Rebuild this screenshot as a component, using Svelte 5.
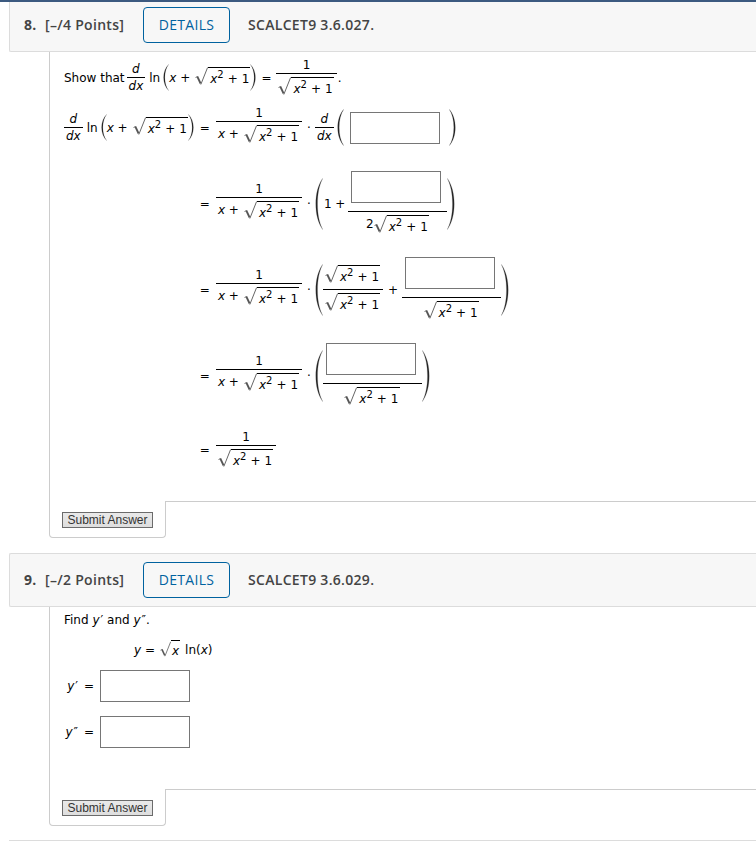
<script>
  let first = $state({ inner: '', chain: '', sum: '', total: '' });
  let second = $state({ prime: '', doublePrime: '' });

  function handleSubmit(event) {
    event.preventDefault();
  }
</script>

{#snippet paren(side, size)}
  <svg class="paren {size}" class:flip={side === 'right'} viewBox="0 0 8 52" preserveAspectRatio="none" aria-hidden="true">
    <path d="M7.800 0.300C3 7 0.800 16 0.800 26s2.200 19 7 25.700C4.200 45 2.500 36 2.500 26S4.200 7 7.800 0.300z" fill="#222" stroke="#555" stroke-width="0.200" />
  </svg>
{/snippet}

{#snippet sign()}
  <svg class="sign" viewBox="0 0 13 18" aria-hidden="true">
    <path d="M0.500 10.500L2.500 9.500" fill="none" stroke="#777" stroke-width="1" />
    <path d="M2.300 9.500L5.600 16.500" fill="none" stroke="#555" stroke-width="1.800" />
    <path d="M5.800 17.500L12.600 0.500" fill="none" stroke="#666" stroke-width="1" />
  </svg>
{/snippet}

{#snippet root()}
  <span class="root">{@render sign()}<span class="radicand"><i>x</i><sup>2</sup><span class="op">+</span>1</span></span>
{/snippet}

{#snippet ddx()}
  <span class="frac ddx"><span><i>d</i></span><span class="den"><i>dx</i></span></span>
{/snippet}

{#snippet lnExpr()}
  <span class="math">
    {@render ddx()}
    <span class="ln">ln</span>
    {@render paren('left', 'small')}
    <span><i>x</i> +</span>
    <span class="inner-root">{@render root()}</span>
    {@render paren('right', 'small')}
  </span>
{/snippet}

{#snippet oneOverRoot()}
  <span class="frac">
    <span>1</span>
    <span class="den">{@render root()}</span>
  </span>
{/snippet}

{#snippet factor()}
  <span class="frac">
    <span>1</span>
    <span class="den"><span><i>x</i> +</span><span class="inner-root">{@render root()}</span></span>
  </span>
  <span class="dot">·</span>
{/snippet}

{#snippet header(number, points, code)}
  <header>
    <span class="number">{number}.</span>
    <span class="points">[–/{points} Points]</span>
    <button type="button" class="details">DETAILS</button>
    <span>{code}</span>
  </header>
{/snippet}

{#snippet footer()}
  <div class="footer">
    <div class="tab"><button class="submit">Submit Answer</button></div>
    <div class="rule"></div>
  </div>
{/snippet}

<div class="topbar"></div>
<main>
  <section>
    {@render header(8, 4, 'SCALCET9 3.6.027.')}
    <form onsubmit={handleSubmit}>
      <div class="content first">
        <div class="math prompt">
          <span class="lead">Show that</span>
          {@render lnExpr()}
          <span class="equals">=</span>
          {@render oneOverRoot()}
          <span class="stop">.</span>
        </div>

        <div class="steps">
          {@render lnExpr()}
          <span>=</span>
          <div class="math">
            {@render factor()}
            {@render ddx()}
            <span class="group">
              {@render paren('left', 'medium')}
              <input type="text" aria-label="Inner function" bind:value={first.inner} />
              {@render paren('right', 'medium')}
            </span>
          </div>

          <span class="eq">=</span>
          <div class="math">
            {@render factor()}
            {@render paren('left', 'large')}
            <span class="term">1 +</span>
            <span class="frac answer">
              <input type="text" aria-label="Numerator of the chain rule term" bind:value={first.chain} />
              <span class="den">2{@render root()}</span>
            </span>
            {@render paren('right', 'large')}
          </div>

          <span class="eq">=</span>
          <div class="math">
            {@render factor()}
            {@render paren('left', 'large')}
            <span class="frac">
              <span class="num">{@render root()}</span>
              <span class="den">{@render root()}</span>
            </span>
            <span class="plus">+</span>
            <span class="frac answer">
              <input type="text" aria-label="Numerator of the second term" bind:value={first.sum} />
              <span class="den">{@render root()}</span>
            </span>
            {@render paren('right', 'large')}
          </div>

          <span class="eq">=</span>
          <div class="math">
            {@render factor()}
            {@render paren('left', 'large')}
            <span class="frac answer">
              <input type="text" aria-label="Combined numerator" bind:value={first.total} />
              <span class="den">{@render root()}</span>
            </span>
            {@render paren('right', 'large')}
          </div>

          <span class="eq">=</span>
          <div class="math">{@render oneOverRoot()}</div>
        </div>
      </div>
      {@render footer()}
    </form>
  </section>

  <section>
    {@render header(9, 2, 'SCALCET9 3.6.029.')}
    <form onsubmit={handleSubmit}>
      <div class="content second">
        <p>Find <i>y</i><span class="prime">′</span> and <i>y</i><span class="prime">″</span>.</p>
        <div class="math given">
          <span><i>y</i> =</span>
          <span class="root short">{@render sign()}<span class="radicand"><i>x</i></span></span>
          <span>ln(<i>x</i>)</span>
        </div>
        <div class="fields">
          <label for="prime"><i>y</i><span class="prime">′</span></label>
          <span>=</span>
          <input id="prime" type="text" bind:value={second.prime} />
          <label for="double-prime"><i>y</i><span class="prime">″</span></label>
          <span>=</span>
          <input id="double-prime" type="text" bind:value={second.doublePrime} />
        </div>
      </div>
      {@render footer()}
    </form>
  </section>
  <div class="next"></div>
</main>

<style>
  :global(body) {
    margin: 0;
    background: #fff;
  }

  .topbar {
    position: fixed;
    top: 0;
    left: 0;
    right: 0;
    height: 2px;
    background: #3c5a80;
  }

  main {
    margin: -2px 0 0 9px;
    color: #000;
    font: 12px/16px Verdana, "DejaVu Sans", sans-serif;
  }

  section {
    margin-bottom: 15px;
  }

  header {
    display: flex;
    align-items: center;
    padding: 8px 14px;
    border: 1px solid #dcdcdc;
    border-right: 0;
    border-radius: 2px 0 0 2px;
    background: #f7f7f7;
    color: #444;
    font: 600 14px/20px "Open Sans", sans-serif;
    letter-spacing: 0.3px;
  }

  .number {
    width: 21px;
    font-weight: 700;
  }

  .points {
    width: 98px;
  }

  .details {
    box-sizing: border-box;
    width: 87px;
    height: 36px;
    margin-right: 18px;
    padding: 0;
    border: 1px solid #00629f;
    border-radius: 4px;
    background: transparent;
    color: #00629f;
    font: 14px/20px "Open Sans", sans-serif;
    letter-spacing: inherit;
    cursor: pointer;
  }

  form {
    margin-left: 40px;
  }

  .content {
    border-left: 1px solid #ccc;
    padding-left: 14px;
  }

  .first {
    padding-top: 5px;
    padding-bottom: 31px;
  }

  .math {
    display: flex;
    align-items: center;
    white-space: nowrap;
  }

  .prompt {
    margin-bottom: 7px;
  }

  .lead {
    margin-right: 2px;
  }

  .equals {
    margin: 0 5px;
  }

  .stop {
    margin-left: 1px;
  }

  .steps {
    display: grid;
    grid-template-columns: max-content max-content 1fr;
    align-items: center;
    column-gap: 6px;
    row-gap: 21px;
  }

  .eq {
    grid-column: 2;
  }

  .frac {
    display: inline-flex;
    flex-direction: column;
    align-items: center;
  }

  .den {
    display: flex;
    justify-content: center;
    align-items: flex-start;
    align-self: stretch;
    box-sizing: border-box;
    border-top: 1px solid #000;
    padding: 3px 3px 2px 2px;
    line-height: 18px;
  }

  .num {
    padding: 0 1px 2px 0;
  }

  .ddx .den {
    padding: 0 2px;
    line-height: 16px;
  }

  .ln {
    margin: 0 3px 0 4px;
  }

  .inner-root {
    margin-left: 5px;
  }

  .root {
    display: inline-flex;
    align-items: stretch;
    height: 19px;
  }

  .sign {
    width: 13px;
    height: 18px;
  }

  .radicand {
    border-top: 1px solid #000;
    padding: 0 1px 0 2px;
    line-height: 22px;
  }

  .short .sign {
    width: 11px;
  }

  .short .radicand {
    padding: 0 1px;
    line-height: 20px;
  }

  sup {
    font-size: 10px;
    line-height: 0;
    vertical-align: 5px;
  }

  .op {
    margin: 0 4px;
  }

  .dot {
    margin: 0 4px 0 5px;
  }

  .group {
    display: inline-flex;
    align-items: center;
    margin-left: 3px;
  }

  .group input {
    margin: 0 9px 0 6px;
  }

  .term {
    margin: 0 3px 0 1px;
  }

  .plus {
    margin: 0 4px 0 5px;
  }

  .answer input {
    margin: 0 6px 8px 3px;
  }

  .paren {
    flex: none;
  }

  .flip {
    transform: scaleX(-1);
  }

  .small {
    width: 6px;
    height: 27px;
  }

  .medium {
    width: 7px;
    height: 37px;
  }

  .large {
    width: 8px;
    height: 52px;
  }

  input {
    box-sizing: border-box;
    width: 90px;
    height: 32px;
    margin: 0;
    padding: 2px 6px;
    border: 1px solid #767676;
    border-radius: 0;
    background: #fff;
    font: inherit;
  }

  .second {
    padding-top: 5px;
    padding-bottom: 41px;
  }

  p {
    margin: 0;
  }

  .prime {
    margin-left: 1px;
  }

  .given {
    gap: 5px;
    margin: 12px 0 11px 70px;
  }

  .fields {
    display: grid;
    grid-template-columns: 14px 10px 90px;
    align-items: center;
    column-gap: 6px;
    row-gap: 14px;
  }

  .fields label {
    text-align: right;
  }

  .footer {
    display: flex;
  }

  .tab {
    box-sizing: border-box;
    width: 117px;
    padding: 11px 12px 9px;
    border: solid #ccc;
    border-width: 0 1px 1px;
    border-radius: 0 0 4px 4px;
  }

  .rule {
    flex: 1;
    border-top: 1px solid #ccc;
  }

  .submit {
    display: block;
    width: 91px;
    height: 16px;
    padding: 0;
    border: 1px solid #6b6b6b;
    border-radius: 0;
    background: linear-gradient(#e9e9e9, #dedede);
    color: #333;
    font: 12px/14px Arial, "Liberation Sans", sans-serif;
    cursor: pointer;
  }

  .next {
    margin-top: -1px;
    border-top: 1px solid #dcdcdc;
  }
</style>
